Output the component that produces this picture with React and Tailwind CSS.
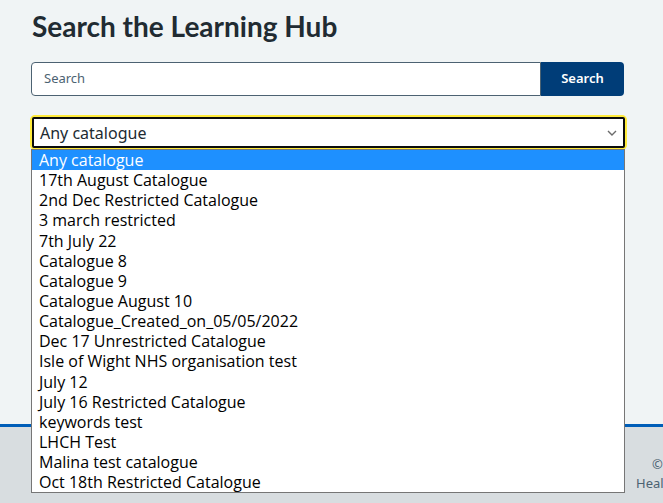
import React from "react";

const items = [
  "Any catalogue",
  "17th August Catalogue",
  "2nd Dec Restricted Catalogue",
  "3 march restricted",
  "7th July 22",
  "Catalogue 8",
  "Catalogue 9",
  "Catalogue August 10",
  "Catalogue_Created_on_05/05/2022",
  "Dec 17 Unrestricted Catalogue",
  "Isle of Wight NHS organisation test",
  "July 12",
  "July 16 Restricted Catalogue",
  "keywords test",
  "LHCH Test",
  "Malina test catalogue",
  "Oct 18th Restricted Catalogue",
];

export default function App() {
  return (
    <div className="relative w-[663px] h-[503px] overflow-hidden bg-[#f0f4f5] font-['Noto_Sans',sans-serif] text-[#212b32]">
      <div className="h-[424px] px-[31px] pt-[6px]">
        <h1 className="text-[28px] leading-[40px] font-bold font-['Lato',sans-serif] pl-[1px]">Search the Learning Hub</h1>
        <div className="mt-[16px] flex w-[593px] h-[34px]">
          <div className="flex-1 bg-white border border-[#4c6272] rounded-l-[4px] flex items-center pl-[12px] text-[13px] text-[#4c6272]">
            Search
          </div>
          <div className="w-[83px] bg-[#003d78] rounded-r-[4px] flex items-center justify-center text-white text-[13px] font-semibold">
            Search
          </div>
        </div>
        <div className="mt-[19px] ml-[-1px] w-[597px] h-[35px] rounded-[5px] bg-[#ffeb3b] p-[2px]">
          <div className="h-full bg-white border-2 border-[#0b0c0c] rounded-[2px] flex items-center justify-between pl-[6px] pr-[6px]">
            <span className="text-[16px] leading-none">Any catalogue</span>
            <svg width="10" height="6" viewBox="0 0 10 6" fill="none">
              <path d="M1 1l4 4 4-4" stroke="#6b6b6b" strokeWidth="1.4" />
            </svg>
          </div>
        </div>
      </div>
      <div className="h-[3px] bg-[#005eb8]" />
      <div className="h-[76px] bg-[#d8dde0] relative">
        <div className="absolute left-[636px] top-[28px] text-[#4c6272] text-[13px] leading-[19px] whitespace-nowrap">
          <div className="pl-[16px]">©</div>
          <div>Health Education England</div>
        </div>
      </div>
      <div className="absolute left-[31px] top-[149px] w-[594px] bg-white border border-[#767676] font-['Open_Sans',sans-serif] text-[16px] text-black">
        {items.map((t, i) => (
          <div
            key={t}
            className={
              "h-[20.15px] leading-[20px] pl-[7px] whitespace-nowrap " +
              (i === 0 ? "bg-[#1e90ff] text-white" : "")
            }
          >
            {t}
          </div>
        ))}
      </div>
    </div>
  );
}
